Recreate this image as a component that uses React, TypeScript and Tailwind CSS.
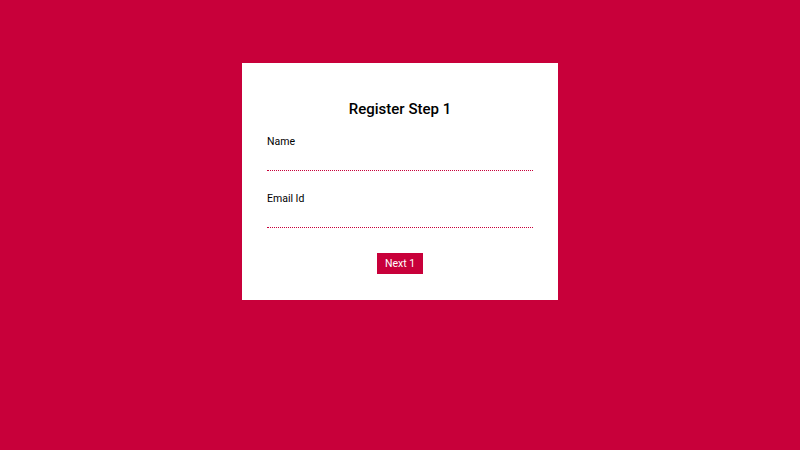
export default function App() {
  return (
    <div className="w-full h-[450px] bg-[#c8003a] flex justify-center pt-[63px]" style={{ fontFamily: 'Roboto, "Noto Sans", sans-serif' }}>
      <form className="w-[316px] h-[237px] bg-white px-[25px] pt-[36px] flex flex-col">
        <h2 className="text-center text-[15px] leading-[20px] font-medium text-black">Register Step 1</h2>
        {/* name field */}
        <label className="mt-[16px] text-[10.5px] leading-[14px] text-black">Name</label>
        <input className="h-[20px] mt-[2px] w-full border-b border-dotted border-[#c8003a] outline-none text-[11px]" />
        {/* email field */}
        <label className="mt-[21px] text-[10.5px] leading-[14px] text-black">Email Id</label>
        <input className="h-[20px] mt-[2px] w-full border-b border-dotted border-[#c8003a] outline-none text-[11px]" />
        <div className="flex justify-center mt-[25px]">
          <button type="button" className="w-[46px] h-[21px] bg-[#c8003a] text-white text-[10.5px] leading-[21px]">Next 1</button>
        </div>
      </form>
    </div>
  );
}
